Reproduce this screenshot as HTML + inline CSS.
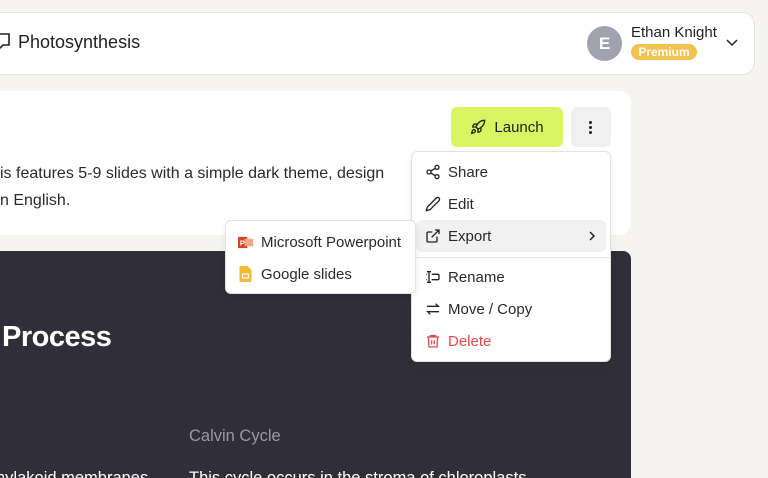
<!DOCTYPE html>
<html><head><style>
*{margin:0;padding:0;box-sizing:border-box}
html,body{width:768px;height:478px;overflow:hidden}
body{background:#f5f4f1;font-family:"Liberation Sans",sans-serif;position:relative;color:#222}
.a{position:absolute}
.card{background:#fff;border:1px solid #e3e3e3;border-radius:12px}
.mi{position:absolute;left:0;width:100%;height:32px;display:flex;align-items:center;font-size:15px;color:#2a2a2a}
.mi svg{margin-left:13px;margin-right:7px}
</style></head><body>
<div class="a card" style="left:-20px;top:12px;width:775px;height:63px"></div>
<svg class="a" style="left:-6px;top:32px" width="18" height="20" viewBox="0 0 18 20" fill="none" stroke="#222" stroke-width="1.6"><path d="M2 2H15V13H9L5 17V13H2"/></svg>
<div class="a" style="left:18px;top:32px;font-size:18px;color:#222">Photosynthesis</div>
<div class="a" style="left:587px;top:26px;width:35px;height:35px;border-radius:50%;background:#9ea3ae;color:#fff;font-weight:bold;font-size:17px;text-align:center;line-height:35px">E</div>
<div class="a" style="left:631px;top:24px;font-size:15px;color:#222">Ethan Knight</div>
<div class="a" style="left:631px;top:44px;width:66px;height:16px;border-radius:8px;background:#f2c14e;color:#fff;font-weight:bold;font-size:12px;text-align:center;line-height:16px">Premium</div>
<svg class="a" style="left:726px;top:37px" width="12" height="10" viewBox="0 0 12 10" fill="none" stroke="#222" stroke-width="1.5"><path d="M1 3L6 8L11 3"/></svg>

<div class="a" style="left:-20px;top:91px;width:651px;height:144px;background:#fff;border-radius:12px"></div>
<div class="a" style="left:0;top:160px;font-size:16px;line-height:27px;color:#2a2a2a;white-space:nowrap">is features 5-9 slides with a simple dark theme, design<br>n English.</div>
<div class="a" style="left:451px;top:107px;width:112px;height:40px;background:#d9f461;border-radius:6px;display:flex;align-items:center;justify-content:center;font-size:15px;color:#222">
<svg width="16" height="16" viewBox="0 0 24 24" fill="none" stroke="#222" stroke-width="2" style="margin-right:8px"><path d="M4.5 16.5c-1.5 1.3-2 5-2 5s3.7-.5 5-2c.7-.8.7-2.1-.1-2.9a2.2 2.2 0 0 0-2.9-.1z"/><path d="M12 15l-3-3a22 22 0 0 1 2-3.9A12.9 12.9 0 0 1 22 2c0 2.7-.8 7.5-6 11a22 22 0 0 1-4 2z"/><path d="M9 12H4s.6-3 2-4c1.6-1.1 5 0 5 0M12 15v5s3-.6 4-2c1.1-1.6 0-5 0-5"/></svg>Launch</div>
<div class="a" style="left:571px;top:107px;width:40px;height:40px;background:#f0f0f0;border-radius:6px"></div>
<div class="a" style="left:589px;top:121px;width:3px;height:3px;border-radius:50%;background:#222;box-shadow:0 5px 0 #222,0 10px 0 #222"></div>

<div class="a" style="left:-20px;top:251px;width:651px;height:240px;background:#302e38;border-radius:8px"></div>
<div class="a" style="left:2px;top:321px;font-size:29px;font-weight:bold;color:#fff;letter-spacing:-0.5px">Process</div>
<div class="a" style="left:189px;top:427px;font-size:16.5px;color:#9a99a2">Calvin Cycle</div>
<div class="a" style="left:-4px;top:469px;font-size:16.5px;color:#fff;white-space:nowrap">hylakoid membranes</div>
<div class="a" style="left:189px;top:469px;font-size:16.5px;color:#fff;white-space:nowrap">This cycle occurs in the stroma of chloroplasts</div>

<div class="a" style="left:411px;top:151px;width:200px;height:211px;background:#fff;border:1px solid #e2e2e2;border-radius:6px;box-shadow:0 3px 8px rgba(0,0,0,.08)">
<div class="mi" style="top:4px"><svg width="16" height="16" viewBox="0 0 24 24" fill="none" stroke="#222" stroke-width="2"><circle cx="18" cy="5" r="3"/><circle cx="6" cy="12" r="3"/><circle cx="18" cy="19" r="3"/><path d="M8.6 13.5l6.8 4M15.4 6.5l-6.8 4"/></svg>Share</div>
<div class="mi" style="top:36px"><svg width="16" height="16" viewBox="0 0 24 24" fill="none" stroke="#222" stroke-width="2"><path d="M17 3a2.8 2.8 0 1 1 4 4L7.5 20.5 2 22l1.5-5.5z"/></svg>Edit</div>
<div class="a" style="left:4px;top:68px;width:190px;height:32px;background:#f1f1f1;border-radius:5px"></div>
<div class="mi" style="top:68px"><svg width="16" height="16" viewBox="0 0 24 24" fill="none" stroke="#222" stroke-width="2"><path d="M15 3h6v6M10 14L21 3M18 13v6a2 2 0 0 1-2 2H5a2 2 0 0 1-2-2V8a2 2 0 0 1 2-2h6"/></svg>Export<svg style="position:absolute;right:14px;margin:0" width="8" height="12" viewBox="0 0 8 12" fill="none" stroke="#222" stroke-width="1.5"><path d="M2 2L6 6L2 10"/></svg></div>
<div class="a" style="left:0;top:105px;width:198px;height:1px;background:#e5e5e5"></div>
<div class="mi" style="top:109px"><svg width="16" height="16" viewBox="0 0 24 24" fill="none" stroke="#222" stroke-width="2"><path d="M6 4v16M3 4h6M3 20h6M10 8h9a2 2 0 0 1 2 2v4a2 2 0 0 1-2 2h-9M2 8h1M2 16h1"/></svg>Rename</div>
<div class="mi" style="top:141px"><svg width="16" height="16" viewBox="0 0 24 24" fill="none" stroke="#222" stroke-width="2"><path d="M3 8h17l-4-4M21 16H4l4 4"/></svg>Move / Copy</div>
<div class="mi" style="top:173px;color:#e5484d"><svg width="16" height="16" viewBox="0 0 24 24" fill="none" stroke="#e5484d" stroke-width="2"><path d="M3 6h18M8 6V4h8v2M5 6l1 15h12l1-15M10 11v6M14 11v6"/></svg>Delete</div>
</div>

<div class="a" style="left:225px;top:220px;width:191px;height:74px;background:#fff;border:1px solid #e2e2e2;border-radius:6px;box-shadow:0 3px 8px rgba(0,0,0,.08)">
<div class="mi" style="top:5px"><svg width="15" height="15" viewBox="0 0 16 16" style="margin-left:12px;margin-right:8px"><rect x="0" y="2" width="10" height="12" rx="1" fill="#d24625"/><rect x="7" y="4" width="9" height="8" fill="#f4a58a"/><text x="2" y="11" font-size="8" fill="#fff" font-family="Liberation Sans" font-weight="bold">P</text></svg>Microsoft Powerpoint</div>
<div class="mi" style="top:37px"><svg width="15" height="16" viewBox="0 0 12 16" style="margin-left:12px;margin-right:8px"><path d="M0 1a1 1 0 0 1 1-1h7l4 4v11a1 1 0 0 1-1 1H1a1 1 0 0 1-1-1z" fill="#f2b932"/><rect x="3" y="8" width="6" height="4" fill="none" stroke="#fff" stroke-width="1.2"/></svg>Google slides</div>
</div>
</body></html>
